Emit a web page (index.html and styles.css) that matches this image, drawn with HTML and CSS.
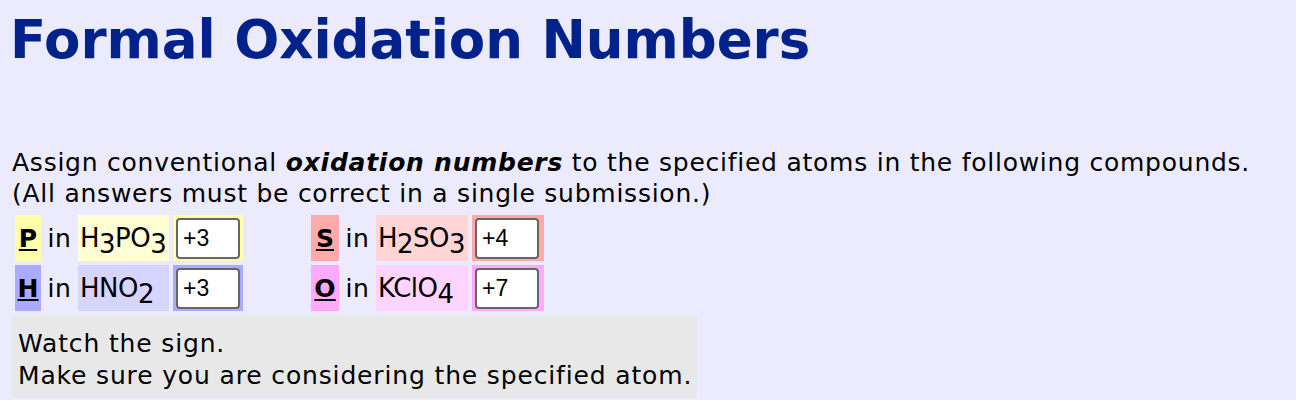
FILE: index.html
```html
<!DOCTYPE html>
<html>
<head>
<meta charset="utf-8">
<link rel="stylesheet" href="styles.css">
</head>
<body>
<h1 class="title">Formal Oxidation Numbers</h1>
<div class="question">
  <p class="prompt">Assign conventional <b><i>oxidation numbers</i></b> to the specified atoms in the following compounds.<br>(All answers must be correct in a single submission.)</p>
  <table class="grid">
    <tr>
      <td class="atom c-yel1"><u>P</u></td>
      <td class="in">in</td>
      <td class="formula c-yel2">H<sub>3</sub>PO<sub>3</sub></td>
      <td class="ans c-yel1"><input class="box" type="text" value="+3"></td>
      <td class="spacer"></td>
      <td class="atom atom2 c-red1"><u>S</u></td>
      <td class="in">in</td>
      <td class="formula formula2 c-red2">H<sub>2</sub>SO<sub>3</sub></td>
      <td class="ans ans2 c-red1"><input class="box" type="text" value="+4"></td>
    </tr>
    <tr>
      <td class="atom c-blu1"><u>H</u></td>
      <td class="in">in</td>
      <td class="formula c-blu2">HNO<sub>2</sub></td>
      <td class="ans c-blu1"><input class="box" type="text" value="+3"></td>
      <td class="spacer"></td>
      <td class="atom atom2 c-pnk1"><u>O</u></td>
      <td class="in">in</td>
      <td class="formula formula2 c-pnk2">KClO<sub>4</sub></td>
      <td class="ans ans2 c-pnk1"><input class="box" type="text" value="+7"></td>
    </tr>
  </table>
  <div class="hint">Watch the sign.<br>Make sure you are considering the specified atom.</div>
</div>
</body>
</html>
```
FILE: styles.css
```css
html, body {
  margin: 0;
  padding: 0;
  background: #ebebfd;
}
body {
  font-family: "DejaVu Sans", Verdana, sans-serif;
  color: #000;
  padding: 0 10px;
}
.title {
  margin: 0;
  padding-top: 10px;
  font-size: 53px;
  line-height: 60px;
  font-weight: bold;
  color: #00228a;
  height: 140px;
}
.prompt {
  margin: 0;
  font-size: 25px;
  letter-spacing: 0.75px;
  line-height: 31px;
  padding-left: 2px;
  margin-top: -3px;
}
.grid {
  border-spacing: 4px;
  margin-left: 1px;
  margin-top: 2px;
  table-layout: fixed;
}
.grid td {
  padding: 0;
  height: 46px;
  font-size: 25px;
  vertical-align: middle;
  box-sizing: border-box;
}
.atom {
  font-weight: bold;
  text-align: center;
  width: 26px;
}
.atom2 {
  width: 28px;
}
.in {
  width: 29px;
  text-align: center;
  letter-spacing: 0.5px;
}
.formula {
  font-size: 26px !important;
  width: 91px;
  padding: 0 0 0 2px !important;
  letter-spacing: -0.5px;
}
.formula2 {
  width: 92px;
}
.formula sub {
  font-size: 26px;
  vertical-align: -6px;
  line-height: 0;
}
.ans {
  width: 70px;
  padding: 0 3px !important;
}
.ans2 {
  width: 72px;
}
.spacer {
  width: 60px;
}
.box {
  width: 64px;
  height: 41px;
  box-sizing: border-box;
  border: 2px solid #666;
  border-radius: 4px;
  background: #fff;
  font-family: "Liberation Sans", Arial, sans-serif;
  font-size: 23px;
  padding: 0 5px;
  margin: 0;
  display: block;
}
.c-yel1 { background: #ffffaa; }
.c-yel2 { background: #ffffd5; }
.c-red1 { background: #ffaaaa; }
.c-red2 { background: #ffd5d5; }
.c-blu1 { background: #aaaaff; }
.c-blu2 { background: #d5d5ff; }
.c-pnk1 { background: #ffaaff; }
.c-pnk2 { background: #ffd5ff; }
.hint {
  background: #e8e8e8;
  width: 686px;
  padding: 12px 0 0 7px;
  height: 82px;
  box-sizing: border-box;
  font-size: 25px;
  letter-spacing: 0.85px;
  line-height: 32px;
  margin-left: 1px;
  margin-top: 1px;
}
```
